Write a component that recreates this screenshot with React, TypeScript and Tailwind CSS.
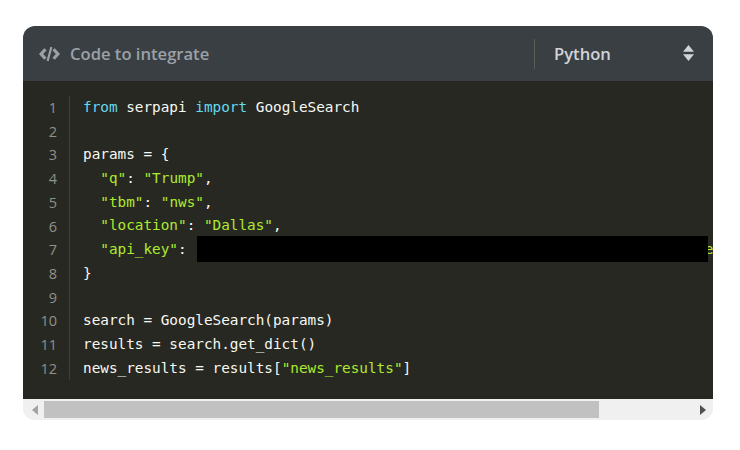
import React from 'react';

const lines: React.ReactNode[] = [
  <><span className="text-[#66d9ef]">from</span> serpapi <span className="text-[#66d9ef]">import</span> GoogleSearch</>,
  '',
  'params = {',
  <>  <span className="text-[#aeea2e]">"q"</span>: <span className="text-[#aeea2e]">"Trump"</span>,</>,
  <>  <span className="text-[#aeea2e]">"tbm"</span>: <span className="text-[#aeea2e]">"nws"</span>,</>,
  <>  <span className="text-[#aeea2e]">"location"</span>: <span className="text-[#aeea2e]">"Dallas"</span>,</>,
  <>  <span className="text-[#aeea2e]">"api_key"</span>: <span className="text-[#aeea2e]">"0123456789abcdef0123456789abcdef0123456789abcdef0123456789eeeeeeeeeeeee"</span></>,
  '}',
  '',
  'search = GoogleSearch(params)',
  'results = search.get_dict()',
  <>news_results = results[<span className="text-[#aeea2e]">"news_results"</span>]</>,
];

const App: React.FC = () => {
  return (
    <div className="w-[740px] h-[450px] bg-white pt-[26px] pl-[23px]">
      <div className="w-[690px] h-[394px] rounded-[12px] overflow-hidden flex flex-col bg-[#f0f0f0]">
        {/* Header */}
        <div className="h-[55px] shrink-0 bg-[#3a3f44] flex items-center font-['Open_Sans',sans-serif]">
          <div className="flex-1 flex items-center pl-[16px] gap-[10px] text-[#9ba1a6]">
            <svg className="mt-[1px]" width="21" height="16" viewBox="0 0 21 16" fill="none" stroke="currentColor" strokeWidth="3.2">
              <path d="M6.4 3.2 2.1 8l4.3 4.8" />
              <path d="M14.6 3.2 18.9 8l-4.3 4.8" />
              <path d="M12.4 1 8.6 15" strokeWidth="2.2" />
            </svg>
            <span className="text-[16.6px] font-semibold pt-[2px]">Code to integrate</span>
          </div>
          <div className="w-px h-[30px] bg-[#5a5d58]" />
          <div className="w-[178px] flex items-center justify-between pl-[19px] pr-[19px] text-[#d0d4d7]">
            <span className="text-[16.6px] font-semibold pt-[2px]">Python</span>
            <svg width="11" height="16" viewBox="0 0 11 16" fill="currentColor">
              <path d="M5.5 0 11 6.8H0Z" />
              <path d="M5.5 16 11 9.2H0Z" />
            </svg>
          </div>
        </div>

        {/* Code */}
        <div className="relative h-[318px] shrink-0 bg-[#272822] overflow-hidden flex pt-[15px] font-['DejaVu_Sans_Mono',monospace] text-[14.35px] leading-[23.7px]">
          <div className="w-[46px] shrink-0 pr-[12px] text-right text-[#8f908a] text-[14.5px] font-['Open_Sans',sans-serif]">
            {lines.map((_, i) => (
              <div key={i}>{i + 1}</div>
            ))}
          </div>
          <div className="h-[284px] border-l border-[#3e3f39] pl-[13px] text-[#f8f8f2] whitespace-pre">
            {lines.map((line, i) => (
              <div key={i} className="h-[23.7px]">{line}</div>
            ))}
          </div>
          {/* redacted key */}
          <div className="absolute left-[174px] top-[155px] w-[511px] h-[26px] bg-black" />
        </div>

        {/* Scrollbar */}
        <div className="mt-px h-[19px] shrink-0 flex items-center bg-[#f0f0f0]">
          <div className="w-[21px] flex justify-center pl-[3px]">
            <svg width="6" height="10" viewBox="0 0 6 10" fill="#a3a3a3"><path d="M6 0v10L0 5Z" /></svg>
          </div>
          <div className="w-[555px] h-[17px] bg-[#c1c1c1]" />
          <div className="flex-1 flex justify-end pr-[7px]">
            <svg width="6" height="10" viewBox="0 0 6 10" fill="#505050"><path d="M0 0v10l6-5Z" /></svg>
          </div>
        </div>
      </div>
    </div>
  );
};

export default App;
